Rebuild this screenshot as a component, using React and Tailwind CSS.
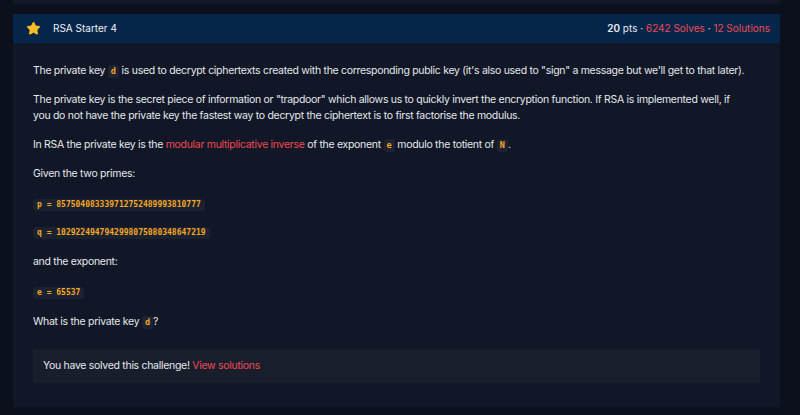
import React from 'react';
import { Star } from 'lucide-react';

const Code = ({ children }) => (
  <code className="inline-flex h-[13px] items-center rounded-[3px] bg-[#1c2333] px-[3px] align-middle font-['DejaVu_Sans_Mono',monospace] text-[8.5px] font-bold leading-none tracking-normal text-[#f5a623]">
    {children}
  </code>
);

const Block = ({ children, className = '' }) => (
  <div className={`flex ${className}`}>
    <code className="flex h-3 items-center rounded-[3px] bg-[#1a2130] px-[4px] font-['DejaVu_Sans_Mono',monospace] text-[8px] font-bold tracking-normal text-[#f5a623] whitespace-pre">
      {children}
    </code>
  </div>
);

const Link = ({ children }) => <span className="text-[#ef4a55]">{children}</span>;

export default function App() {
  return (
    <div className="h-[415px] w-[800px] overflow-hidden bg-[#0b101c] font-['Inter',sans-serif]">
      <div className="ml-[13px] w-[767px]">
        <div className="h-1 bg-[#111827]" />
        <div className="mt-[10px] bg-[#111726]">
          {/* header */}
          <div className="flex h-[29px] items-center bg-[#05264a] pl-[13px] pr-[10px]">
            <Star size={15} className="text-[#fbbf24]" fill="#fbbf24" strokeWidth={1.5} />
            <span className="ml-[12px] text-[10px] text-[#eef0f4]">RSA Starter 4</span>
            <div className="ml-auto text-[10px] text-[#e8ebf0]">
              <span className="font-semibold">20</span>
              <span> pts · </span>
              <span className="text-[#ef4a55]">6242 Solves</span>
              <span> · </span>
              <span className="text-[#ef4a55]">12 Solutions</span>
            </div>
          </div>

          {/* body */}
          <div className="px-5 pt-5 pb-6 text-[10.5px] leading-4 tracking-[-0.3px] text-[#e4e7ec]">
            <p>
              The private key <Code>d</Code> is used to decrypt ciphertexts created with the corresponding public key (it's also used to "sign" a message but we'll get to that later).
            </p>
            <p className="mt-[13px] pr-[20px]">
              The private key is the secret piece of information or "trapdoor" which allows us to quickly invert the encryption function. If RSA is implemented well, if you do not have the private key the fastest way to decrypt the ciphertext is to first factorise the modulus.
            </p>
            <p className="mt-[13px]">
              In RSA the private key is the <Link>modular multiplicative inverse</Link> of the exponent <Code>e</Code> modulo the totient of <Code>N</Code>.
            </p>
            <p className="mt-[13px]">Given the two primes:</p>
            <Block className="mt-[17px]">p = 857504083339712752489993810777</Block>
            <Block className="mt-4">q = 1029224947942998075080348647219</Block>
            <p className="mt-[15px]">and the exponent:</p>
            <Block className="mt-[17px]">e = 65537</Block>
            <p className="mt-[15px]">
              What is the private key <Code>d</Code>?
            </p>
            <div className="mt-[19px] flex h-[34px] items-center bg-[#191e2d] px-[10px]">
              <span>
                You have solved this challenge! <Link>View solutions</Link>
              </span>
            </div>
          </div>
        </div>
      </div>
    </div>
  );
}
